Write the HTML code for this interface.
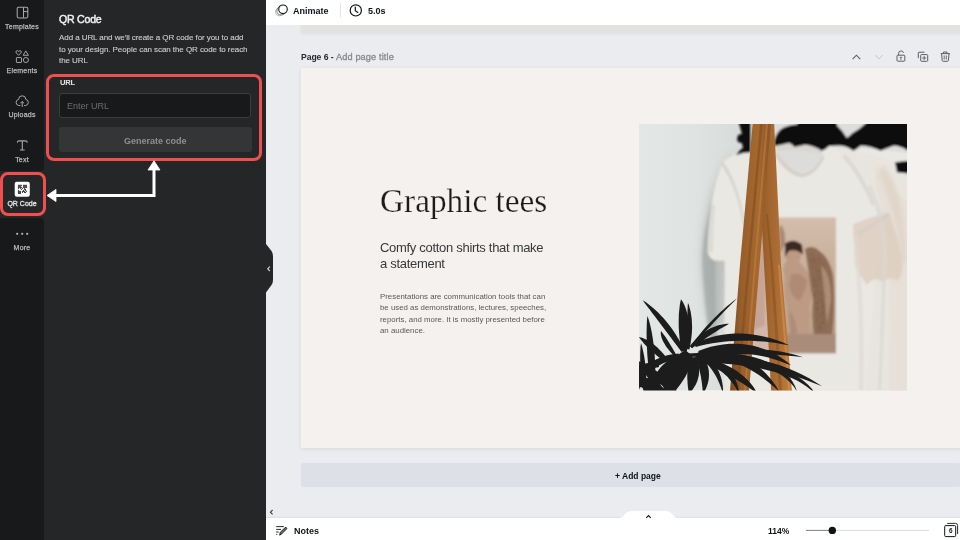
<!DOCTYPE html>
<html><head><meta charset="utf-8">
<style>
*{margin:0;padding:0;box-sizing:border-box}
html,body{width:960px;height:540px;overflow:hidden;background:#ebecf0;font-family:"Liberation Sans",sans-serif}
.t,.lbl,.tx{will-change:transform}
.abs{position:absolute}
.t{position:absolute;white-space:nowrap;line-height:1}
#side{left:0;top:0;width:44px;height:540px;background:#18191b}
#panel{left:44px;top:0;width:222px;height:540px;background:#252627}
.lbl{position:absolute;left:0;width:44px;text-align:center;white-space:nowrap;color:#b9babb;font-size:7px;font-weight:normal;letter-spacing:0.22px;-webkit-text-stroke:0.25px #b9babb;line-height:1}
svg{position:absolute;overflow:visible}
</style></head><body>
<!-- canvas backgrounds -->
<div class="abs" style="left:300.5px;top:25px;width:660px;height:8px;background:#e3e2e0;box-shadow:0 1px 3px rgba(40,50,70,0.07)"></div>
<div class="abs" style="left:266px;top:0;width:694px;height:25px;background:#fff"></div>

<!-- sidebar -->
<div id="side" class="abs"></div>
<div id="panel" class="abs"></div>
<!-- selected tab background & neighbors -->
<div class="abs" style="left:0;top:160px;width:44px;height:70px;background:#252627"></div>
<div class="abs" style="left:0;top:130px;width:44px;height:41px;background:#18191b;border-bottom-right-radius:4px"></div>
<div class="abs" style="left:0;top:218px;width:44px;height:60px;background:#18191b;border-top-right-radius:4px"></div>

<!-- Templates icon -->
<svg style="left:0;top:0" width="44" height="40">
  <rect x="17.2" y="7.3" width="10.6" height="10.6" rx="1.3" fill="none" stroke="#a8a9aa" stroke-width="1.05"/>
  <line x1="23.5" y1="7.3" x2="23.5" y2="17.9" stroke="#a8a9aa" stroke-width="1"/>
  <line x1="23.5" y1="11.6" x2="27.8" y2="11.6" stroke="#a8a9aa" stroke-width="1"/>
</svg>
<div class="lbl" style="top:22.8px">Templates</div>

<!-- Elements icon -->
<svg style="left:0;top:40" width="44" height="40">
</svg>
<svg style="left:0;top:0" width="44" height="80">
  <path d="M18.6 55.3 L16.3 52.9 Q15.5 51.9 16.2 51.1 Q17.1 50.3 18.1 51 L18.6 51.4 L19.1 51 Q20.1 50.3 21 51.1 Q21.7 51.9 20.9 52.9 Z" fill="none" stroke="#a8a9aa" stroke-width="0.95" stroke-linejoin="round"/>
  <path d="M25.8 50.9 L28.4 55.3 L23.2 55.3 Z" fill="none" stroke="#a8a9aa" stroke-width="0.95" stroke-linejoin="round"/>
  <rect x="16.4" y="57.6" width="5.1" height="4.9" rx="0.4" fill="none" stroke="#a8a9aa" stroke-width="0.95"/>
  <circle cx="25.9" cy="60" r="2.55" fill="none" stroke="#a8a9aa" stroke-width="0.95"/>
</svg>
<div class="lbl" style="top:67.3px">Elements</div>

<!-- Uploads icon -->
<svg style="left:0;top:0" width="44" height="120">
  <path d="M20.3 105.5 L18.7 105.5 A3.1 3.1 0 0 1 18.6 99.4 A3.6 3.6 0 0 1 25.8 99.4 A3.1 3.1 0 0 1 25.7 105.5 L24.1 105.5" fill="none" stroke="#a8a9aa" stroke-width="1"/>
  <path d="M22.2 107 L22.2 101.6 M20.4 103.3 L22.2 101.5 L24 103.3" fill="none" stroke="#a8a9aa" stroke-width="1"/>
</svg>
<div class="lbl" style="top:111.3px">Uploads</div>

<!-- Text icon -->
<svg style="left:0;top:0" width="44" height="160">
  <path d="M17.3 142.6 Q17.4 140.9 19.2 140.9 L25.4 140.9 Q27.2 140.9 27.3 142.6 M22.3 140.9 L22.3 150 M19.9 150 L24.7 150" fill="none" stroke="#a8a9aa" stroke-width="1.1"/>
</svg>
<div class="lbl" style="top:155.5px">Text</div>

<!-- QR Code icon -->
<svg style="left:0;top:0" width="44" height="200">
  <rect x="14.7" y="181.7" width="15.1" height="15.1" rx="2" fill="#fff"/>
  <g fill="#3a3b3c" filter="url(#qrb)"><rect x="17.90" y="184.80" width="1.06" height="1.06"/><rect x="18.91" y="184.80" width="1.06" height="1.06"/><rect x="19.92" y="184.80" width="1.06" height="1.06"/><rect x="20.93" y="184.80" width="1.06" height="1.06"/><rect x="22.96" y="184.80" width="1.06" height="1.06"/><rect x="23.97" y="184.80" width="1.06" height="1.06"/><rect x="24.98" y="184.80" width="1.06" height="1.06"/><rect x="25.99" y="184.80" width="1.06" height="1.06"/><rect x="17.90" y="185.81" width="1.06" height="1.06"/><rect x="18.91" y="185.81" width="1.06" height="1.06"/><rect x="19.92" y="185.81" width="1.06" height="1.06"/><rect x="22.96" y="185.81" width="1.06" height="1.06"/><rect x="23.97" y="185.81" width="1.06" height="1.06"/><rect x="24.98" y="185.81" width="1.06" height="1.06"/><rect x="25.99" y="185.81" width="1.06" height="1.06"/><rect x="17.90" y="186.82" width="1.06" height="1.06"/><rect x="18.91" y="186.82" width="1.06" height="1.06"/><rect x="19.92" y="186.82" width="1.06" height="1.06"/><rect x="20.93" y="186.82" width="1.06" height="1.06"/><rect x="22.96" y="186.82" width="1.06" height="1.06"/><rect x="23.97" y="186.82" width="1.06" height="1.06"/><rect x="24.98" y="186.82" width="1.06" height="1.06"/><rect x="25.99" y="186.82" width="1.06" height="1.06"/><rect x="17.90" y="187.83" width="1.06" height="1.06"/><rect x="19.92" y="187.83" width="1.06" height="1.06"/><rect x="21.94" y="187.83" width="1.06" height="1.06"/><rect x="23.97" y="187.83" width="1.06" height="1.06"/><rect x="20.93" y="188.84" width="1.06" height="1.06"/><rect x="23.97" y="188.84" width="1.06" height="1.06"/><rect x="24.98" y="188.84" width="1.06" height="1.06"/><rect x="17.90" y="189.86" width="1.06" height="1.06"/><rect x="22.96" y="189.86" width="1.06" height="1.06"/><rect x="24.98" y="189.86" width="1.06" height="1.06"/><rect x="17.90" y="190.87" width="1.06" height="1.06"/><rect x="18.91" y="190.87" width="1.06" height="1.06"/><rect x="19.92" y="190.87" width="1.06" height="1.06"/><rect x="21.94" y="190.87" width="1.06" height="1.06"/><rect x="22.96" y="190.87" width="1.06" height="1.06"/><rect x="23.97" y="190.87" width="1.06" height="1.06"/><rect x="25.99" y="190.87" width="1.06" height="1.06"/><rect x="17.90" y="191.88" width="1.06" height="1.06"/><rect x="18.91" y="191.88" width="1.06" height="1.06"/><rect x="19.92" y="191.88" width="1.06" height="1.06"/><rect x="21.94" y="191.88" width="1.06" height="1.06"/><rect x="23.97" y="191.88" width="1.06" height="1.06"/><rect x="24.98" y="191.88" width="1.06" height="1.06"/><rect x="17.90" y="192.89" width="1.06" height="1.06"/><rect x="18.91" y="192.89" width="1.06" height="1.06"/><rect x="19.92" y="192.89" width="1.06" height="1.06"/></g>
  <defs><filter id="qrb"><feGaussianBlur stdDeviation="0.25"/></filter></defs>
</svg>
<div class="lbl" style="top:200.2px;color:#e4e4e4;letter-spacing:0;-webkit-text-stroke:0.3px #e4e4e4;left:0.3px">QR Code</div>

<!-- More -->
<svg style="left:0;top:0" width="44" height="240">
  <circle cx="17.2" cy="233.8" r="1.15" fill="#b0b1b2"/>
  <circle cx="22.2" cy="233.8" r="1.15" fill="#b0b1b2"/>
  <circle cx="27.2" cy="233.8" r="1.15" fill="#b0b1b2"/>
</svg>
<div class="lbl" style="top:244.2px">More</div>

<!-- red highlight QR item -->
<div class="abs" style="left:0.2px;top:171.8px;width:45.9px;height:44px;border:3.4px solid #f04f4f;border-radius:8px"></div>

<!-- panel contents -->
<div class="t" style="left:59.3px;top:13.8px;font-size:10.6px;color:#f2f2f2;letter-spacing:-0.25px;-webkit-text-stroke:0.45px #f2f2f2">QR Code</div>
<div class="abs tx" style="left:59.3px;top:32px;font-size:8px;line-height:11.5px;color:#cbcccd;white-space:nowrap;letter-spacing:-0.07px;-webkit-text-stroke:0.12px #cbcccd">Add a URL and we'll create a QR code for you to add<br>to your design. People can scan the QR code to reach<br>the URL</div>
<div class="t" style="left:59.5px;top:79.1px;font-size:7.6px;font-weight:bold;color:#e6e6e6;letter-spacing:-0.25px">URL</div>
<div class="abs" style="left:58.8px;top:93px;width:192.7px;height:24.5px;background:#18191b;border:1px solid #3b3c3e;border-radius:3px"></div>
<div class="t" style="left:67.4px;top:102.2px;font-size:9px;color:#6c6d6f">Enter URL</div>
<div class="abs" style="left:59px;top:127px;width:192.5px;height:25px;background:#343537;border-radius:3px"></div>
<div class="t" style="left:59px;width:192.5px;text-align:center;top:136.6px;font-size:9px;font-weight:bold;color:#8e8f90">Generate code</div>
<div class="abs" style="left:46.2px;top:73.6px;width:216px;height:87px;border:3.4px solid #f04f4f;border-radius:8px"></div>

<!-- arrows -->
<svg style="left:0;top:0" width="270" height="220">
  <path d="M55 195.5 L154 195.5 L154 169" fill="none" stroke="#fff" stroke-width="3"/>
  <path d="M47 195.5 L56 189.4 L56 201.6 Z" fill="#fff" stroke="#fff" stroke-width="0.8" stroke-linejoin="round"/>
  <path d="M154 160.8 L148 170 L160 170 Z" fill="#fff" stroke="#fff" stroke-width="0.8" stroke-linejoin="round"/>
</svg>

<!-- collapse handle -->
<svg style="left:0;top:0" width="300" height="300">
  <path d="M265 244 L266 244 L271.5 251 Q273 253 273 256 L273 280 Q273 283 271.5 285 L266 292.5 L265 292.5 Z" fill="#252627"/>
  <path d="M269.8 266.6 L267.7 268.8 L269.8 271" fill="none" stroke="#d4d5d6" stroke-width="1.1"/>
</svg>

<!-- top bar contents -->
<svg style="left:0;top:0" width="400" height="25">
  <circle cx="279.3" cy="12.1" r="3.8" fill="none" stroke="#b0b2b5" stroke-width="0.9"/>
  <circle cx="281" cy="10.8" r="4.1" fill="#fff" stroke="#6f7276" stroke-width="0.9"/>
  <circle cx="283" cy="9.3" r="4.3" fill="#fff" stroke="#0e1318" stroke-width="1.1"/>
  <line x1="340.5" y1="3" x2="340.5" y2="17.5" stroke="#e4e5e7" stroke-width="1"/>
  <circle cx="355.8" cy="10.4" r="5.6" fill="none" stroke="#0e1318" stroke-width="1.2"/>
  <path d="M355.3 6.8 L355.3 10.8 L358.2 12.8" fill="none" stroke="#0e1318" stroke-width="1.2"/>
</svg>
<div class="t" style="left:293.2px;top:6.8px;font-size:9px;font-weight:bold;color:#0e1318">Animate</div>
<div class="t" style="left:368.3px;top:6.8px;font-size:9px;font-weight:bold;color:#0e1318">5.0s</div>

<!-- page header -->
<div class="t" style="left:301px;top:53.2px;font-size:8.6px;font-weight:bold;color:#25292e;letter-spacing:-0.05px">Page 6 -</div><div class="t" style="left:336px;top:52.8px;font-size:9.2px;color:#85888c;letter-spacing:0.12px;-webkit-text-stroke:0.3px #85888c">Add page title</div>
<svg style="left:0;top:0" width="960" height="70">
  <path d="M852.6 59.2 L856.4 55.2 L860.2 59.2" fill="none" stroke="#5a5e63" stroke-width="1.1"/>
  <path d="M875.2 55 L879 59 L882.8 55" fill="none" stroke="#c3c6ca" stroke-width="1"/>
  <rect x="897" y="55.2" width="7.8" height="6" rx="0.8" fill="none" stroke="#5a5e63" stroke-width="1"/>
  <path d="M898.6 55.2 L898.6 53.2 Q898.8 50.9 901 50.9 Q903.2 50.9 903.5 52.8" fill="none" stroke="#5a5e63" stroke-width="1"/>
  <path d="M900.9 60 L900.9 57 M899.8 58 L900.9 56.8 L902 58" fill="none" stroke="#5a5e63" stroke-width="0.8"/>
  <path d="M924.5 52.2 L919 52.2 Q918.3 52.2 918.3 53 L918.3 58.2" fill="none" stroke="#5a5e63" stroke-width="1"/>
  <rect x="920.7" y="54.6" width="7" height="6.7" rx="0.8" fill="none" stroke="#5a5e63" stroke-width="1"/>
  <path d="M924.2 56 L924.2 60 M922.2 58 L926.2 58" fill="none" stroke="#5a5e63" stroke-width="0.9"/>
  <path d="M940.7 53.6 L949.9 53.6 M943.5 53.4 L943.5 52 L947 52 L947 53.4" fill="none" stroke="#5a5e63" stroke-width="1"/>
  <path d="M941.6 53.8 L942.2 60.4 Q942.3 61.3 943.2 61.3 L947.4 61.3 Q948.3 61.3 948.4 60.4 L949 53.8" fill="none" stroke="#5a5e63" stroke-width="1"/>
  <path d="M944.2 55.5 L944.2 59.5 M946.3 55.5 L946.3 59.5" fill="none" stroke="#5a5e63" stroke-width="0.9"/>
</svg>

<!-- page -->
<div class="abs" style="left:301px;top:68px;width:670px;height:380px;background:#f4f1ee;box-shadow:0 1px 4px rgba(40,50,70,0.10)"></div>
<div class="t" style="left:380px;top:184.1px;font-family:'Liberation Serif',serif;font-size:33.3px;color:#1b1b1c;-webkit-text-stroke:0.25px #f4f1ee">Graphic tees</div>
<div class="abs tx" style="left:380px;top:239.6px;font-size:13px;line-height:16.2px;color:#38393b;white-space:nowrap;letter-spacing:-0.3px">Comfy cotton shirts that make<br>a statement</div>
<div class="abs tx" style="left:380px;top:290.8px;font-size:7.85px;line-height:11.43px;color:#58595b;white-space:nowrap">Presentations are communication tools that can<br>be used as demonstrations, lectures, speeches,<br>reports, and more. It is mostly presented before<br>an audience.</div>

<!-- photo -->
<svg style="left:639px;top:124.3px" width="268" height="266.4" viewBox="0 0 268 265" preserveAspectRatio="none">
<defs>
  <clipPath id="pc"><rect x="0" y="0" width="268" height="265"/></clipPath>
  <filter id="b1" x="-20%" y="-20%" width="140%" height="140%"><feGaussianBlur stdDeviation="0.8"/></filter>
  <filter id="b2" x="-50%" y="-50%" width="200%" height="200%"><feGaussianBlur stdDeviation="4"/></filter>
  <filter id="b3" x="-50%" y="-50%" width="200%" height="200%"><feGaussianBlur stdDeviation="1.6"/></filter>
  <filter id="b05" x="-20%" y="-20%" width="140%" height="140%"><feGaussianBlur stdDeviation="0.5"/></filter>
  <filter id="mot"><feTurbulence type="fractalNoise" baseFrequency="0.35" numOctaves="2" seed="4" result="n"/><feColorMatrix in="n" type="matrix" values="0 0 0 0 0  0 0 0 0 0  0 0 0 0 0  0 0 0 -2.2 1.3" result="a"/><feComposite in="SourceGraphic" in2="a" operator="in"/></filter>
  <linearGradient id="wall" x1="0" y1="0" x2="1" y2="0">
    <stop offset="0" stop-color="#e3e7e6"/><stop offset="0.2" stop-color="#dfe3e2"/><stop offset="0.4" stop-color="#d6dad8"/>
  </linearGradient>
  <linearGradient id="woodL" x1="0" y1="0" x2="1" y2="0">
    <stop offset="0" stop-color="#7a4a26"/><stop offset="0.3" stop-color="#9a5f2b"/><stop offset="0.7" stop-color="#a5682f"/><stop offset="1" stop-color="#8a5328"/>
  </linearGradient>
  <linearGradient id="woodR" x1="0" y1="0" x2="1" y2="0">
    <stop offset="0" stop-color="#845227"/><stop offset="0.3" stop-color="#a0632c"/><stop offset="0.65" stop-color="#ae6f35"/><stop offset="1" stop-color="#c27f3d"/>
  </linearGradient>
  <linearGradient id="print" x1="0" y1="0" x2="0" y2="1">
    <stop offset="0" stop-color="#d3bdab"/><stop offset="0.3" stop-color="#cbb29f"/><stop offset="0.8" stop-color="#bea48f"/><stop offset="1" stop-color="#a98e7b"/>
  </linearGradient>
</defs>
<g clip-path="url(#pc)">
  <rect x="0" y="0" width="268" height="265" fill="url(#wall)"/>
  <!-- shadow of shirt on wall -->
  <path d="M96 26 Q76 50 68 90 Q62 125 64 150 Q66 175 72 200 L86 200 L90 40 Z" fill="#a6aba9" filter="url(#b2)" opacity="0.6"/>
  <path d="M88 38 Q74 66 66 106 Q62 128 64 150 Q66 180 70 215 L78 215 Q74 130 80 90 Q84 60 92 40 Z" fill="#a3a8a6" filter="url(#b3)" opacity="0.75"/>
  <g filter="url(#b1)">
  <!-- wall top between hangers -->
  <rect x="112" y="-5" width="165" height="39" fill="#dcdedc"/>
  <!-- shirts base -->
  <path d="M111 24 Q100 27 94 31 Q86 36 84 37 Q76 56 72 80 Q69 105 68.5 127 Q70 134 76 136 L86 136 L85 272 L275 272 L275 30 Q240 24 200 24 Q180 20 160 19 Q140 18 111 24 Z" fill="#eae8e3"/>
  <!-- back shirts with tint -->
  <path d="M200 24 Q235 28 262 40 L275 60 L275 272 L226 272 Q232 200 236 150 Q246 120 250 92 Q236 58 200 30 Z" fill="#e8e5df"/>
  <path d="M236 40 Q252 50 258 70 L275 80 L275 272 L250 272 Q252 180 248 120 Q244 90 236 60 Z" fill="#e6e0d8"/>
  <path d="M214 100 Q232 92 250 88 Q258 110 262 130 Q266 150 258 156 Q250 150 244 158 Q236 150 228 160 Q220 150 216 140 Z" fill="#dccbbb" opacity="0.75"/>
  <path d="M244 40 Q262 60 266 110 L268 140 L262 135 Q258 90 240 50 Z" fill="#dccdbd" opacity="0.5" filter="url(#b3)"/>
  <path d="M232 60 Q246 90 248 120 Q246 180 242 265 L239 265 Q243 180 244 120 Q241 90 229 62 Z" fill="#dbd8d2" opacity="0.8"/>
  <path d="M206 30 Q224 48 236 80 L233 82 Q221 52 203 32 Z" fill="#dcd9d3"/>
  <path d="M218 108 Q236 98 250 88 L251 90.5 Q236 100 220 111 Z" fill="#d3cfc8"/>
  <path d="M214 112 Q222 180 220 265 L224 265 Q226 180 218 112 Z" fill="#dedad4" opacity="0.8"/>
  <!-- collar -->
  <path d="M136 19 Q160 17 184 23 L183 30 Q160 26 137 27 Z" fill="#d9d6d0"/>
  <path d="M137 27 Q150 44 162 48 Q176 47 184 30 Q160 24 137 27 Z" fill="#dcdcda"/>
  <path d="M137 27 Q150 45 162 49 Q176 48 184 30 L185 34 Q176 52 162 53 Q148 50 136 32 Z" fill="#d4d0ca"/>
  <!-- sleeve seam front shirt -->
  <path d="M84 37 Q100 60 106 100 L104 100 Q98 62 82 40 Z" fill="#d5d3ce"/>
  <path d="M72 80 Q70 105 69 127 L74 128 Q74 105 76 80 Z" fill="#dcdad5"/>
  <!-- hangers -->
  <path d="M135 21 Q135 12 141 6 Q147 1 158 0.5 L160 -4 L198 -4 L198 1.5 Q203 6 208 14 Q214 8 220 5 Q225 1 230 -4 L275 -4 L275 26 L268 26 Q262 22 255 21.4 Q248 24 241.7 26.6 Q232 22 221.7 21.4 Q218 25 214.3 26.6 Q208 22 201 21.4 Q195 21 190 22 Q186 26 182.8 26.6 Q174 21 165.8 20.7 Q160 22 155.4 23 Q152 19 149.5 19 Q142 21 135 22 Z" fill="#0b0b0b"/>
  <path d="M256 38 L275 36 L275 50 L258 48 Z" fill="#0b0b0b"/>
  <path d="M99 -4 L112 -4 L112 28 Q104 28 97 31 Q101 25 104 24 L103 19 Q99 19 98 16 L99 11 L103 10 Z" fill="#0d0d0d"/>
  <!-- print -->
  <rect x="140" y="93" width="57" height="135" fill="url(#print)"/>
  <rect x="113" y="93" width="27" height="135" fill="#d2b8ab"/>
  <path d="M146 124 Q153 116 161 122 Q164 130 160 137 Q168 144 172 156 Q174 170 170 182 Q172 196 168 210 L152 212 Q148 196 148 182 Q144 168 146 152 Q142 142 148 136 Q144 130 146 124 Z" fill="#bc9a84"/>
  <path d="M152 150 Q160 146 168 156 Q166 170 160 176 Q152 172 150 160 Z" fill="#a98571" opacity="0.7"/>
  <path d="M150 186 Q156 190 158 208 L152 210 Z" fill="#a48470" opacity="0.6"/>
  <path d="M146 119 Q154 113 163 120 L164 130 Q158 124 150 126 L146 132 Z" fill="#3a2b24"/>
  <path d="M142 100 Q147 106 146 120 L141 128 L140 104 Z" fill="#a27e68" opacity="0.8"/>
  <path d="M166 124 Q174 120 180 126 Q190 132 194 150 Q197 180 193 212 L176 214 Q172 196 174 176 Q170 150 166 124 Z" fill="#8e6c54"/>
  <path d="M170 130 Q180 128 186 140 Q190 170 186 205 L178 206 Q176 170 170 130 Z" fill="#6a4d3a" opacity="0.6" filter="url(#mot)"/>
  <path d="M182 140 Q192 150 192 175 L188 200 Q186 170 182 140 Z" fill="#c4a48d" opacity="0.6"/>
  <rect x="140" y="209" width="57" height="19" fill="#a98d7a"/>
  <path d="M114 110 Q120 104 126 112 L126 200 L115 205 Z" fill="#c3a091" opacity="0.8"/>
  </g>
  <!-- ladder -->
  <g filter="url(#b05)">
  <path d="M117 -4 L135 -4 L142 140 L153.5 272 L132.5 272 L125 140 Z" fill="url(#woodR)"/>
  <path d="M114 -4 L132 -4 L120.6 140 L109.5 272 L90.5 272 L101 140 Z" fill="url(#woodL)"/>
  <path d="M121 0 L123.5 0 L111 140 L100 265 L97 265 L108.5 140 Z" fill="#7a4820" opacity="0.5"/>
  <path d="M127 0 L129 0 L117 140 L107 265 L105 265 L115 140 Z" fill="#c58442" opacity="0.5"/>
  <path d="M127 90 L129 90 L134 140 L143 265 L140 265 L131.5 140 Z" fill="#7e4b20" opacity="0.45"/>
  <path d="M139 140 L141 140 L151 265 L149 265 Z" fill="#d99550" opacity="0.55"/>
  </g>
  <!-- plant -->
  <g fill="#1b1d1b" filter="url(#b05)">
    <path d="M45.4 225.1 L43.5 221.2 L41.5 217.3 L39.3 213.6 L37.1 209.9 L34.8 206.4 L32.4 203.0 L29.9 199.6 L27.3 196.4 L24.6 193.3 L21.9 190.4 L19.1 187.5 L16.1 184.8 L13.2 182.2 L10.1 179.7 L7.0 177.4 L3.7 175.3 L3.7 175.3 L6.0 178.5 L8.3 181.5 L10.7 184.6 L13.0 187.7 L15.4 190.8 L17.8 193.9 L20.1 197.0 L22.5 200.2 L25.0 203.4 L27.4 206.7 L29.9 209.9 L32.4 213.2 L34.9 216.6 L37.4 219.9 L40.0 223.4 L42.6 226.9 Z"/>
    <path d="M47.8 226.1 L48.5 222.2 L49.2 218.5 L49.7 214.8 L50.0 211.1 L50.2 207.5 L50.2 204.0 L50.1 200.6 L49.8 197.3 L49.4 194.1 L48.8 190.9 L48.1 187.9 L47.2 184.9 L46.2 182.1 L45.0 179.4 L43.7 176.8 L42.0 174.4 L42.0 174.4 L41.3 177.2 L40.8 180.0 L40.5 182.9 L40.2 185.8 L39.9 188.7 L39.8 191.7 L39.7 194.8 L39.7 197.9 L39.7 201.1 L39.9 204.4 L40.1 207.7 L40.4 211.2 L40.7 214.7 L41.2 218.4 L41.7 222.1 L42.2 225.9 Z"/>
    <path d="M50.4 224.2 L51.1 220.9 L51.6 217.8 L52.1 214.6 L52.5 211.5 L52.8 208.5 L53.0 205.4 L53.1 202.4 L53.0 199.5 L52.9 196.6 L52.7 193.8 L52.3 191.0 L51.9 188.3 L51.4 185.6 L50.7 183.0 L50.0 180.4 L49.0 178.0 L49.0 178.0 L48.7 180.6 L48.6 183.2 L48.5 185.8 L48.4 188.5 L48.2 191.2 L48.1 193.9 L48.0 196.7 L48.0 199.5 L47.9 202.4 L47.8 205.3 L47.8 208.2 L47.7 211.2 L47.7 214.3 L47.7 217.4 L47.6 220.6 L47.6 223.8 Z"/>
    <path d="M15.9 265.9 L16.1 260.2 L16.3 254.6 L16.3 249.2 L16.3 243.9 L16.1 238.7 L15.9 233.7 L15.6 228.8 L15.1 224.0 L14.6 219.4 L14.0 214.9 L13.3 210.5 L12.6 206.3 L11.7 202.3 L10.8 198.4 L9.7 194.6 L8.4 191.0 L8.4 191.0 L8.0 194.8 L7.8 198.7 L7.7 202.7 L7.6 206.8 L7.6 211.0 L7.7 215.4 L7.8 219.9 L8.1 224.5 L8.3 229.3 L8.7 234.1 L9.1 239.1 L9.5 244.3 L10.1 249.5 L10.7 254.9 L11.3 260.4 L12.1 266.1 Z"/>
    <path d="M52.6 222.5 L55.3 219.3 L57.9 216.2 L60.7 213.2 L63.4 210.1 L66.1 207.0 L68.9 203.9 L71.7 200.9 L74.5 197.8 L77.4 194.8 L80.2 191.7 L83.1 188.7 L86.0 185.6 L89.0 182.6 L92.0 179.5 L95.0 176.5 L98.0 173.4 L98.0 173.4 L94.5 176.0 L91.2 178.7 L87.9 181.4 L84.7 184.2 L81.5 187.1 L78.5 189.9 L75.4 192.9 L72.5 195.9 L69.6 198.9 L66.8 202.0 L64.0 205.2 L61.4 208.4 L58.8 211.6 L56.2 214.9 L53.8 218.2 L51.4 221.5 Z"/>
    <path d="M53.1 223.1 L55.6 221.2 L58.1 219.4 L60.5 217.7 L62.9 216.0 L65.2 214.3 L67.5 212.7 L69.8 211.2 L72.0 209.7 L74.3 208.2 L76.5 206.8 L78.7 205.4 L80.9 204.0 L83.2 202.7 L85.4 201.4 L87.7 200.1 L90.0 198.7 L90.0 198.7 L87.3 198.7 L84.6 199.1 L82.0 199.6 L79.3 200.3 L76.7 201.1 L74.1 202.2 L71.5 203.3 L69.0 204.7 L66.5 206.2 L64.1 207.9 L61.7 209.7 L59.4 211.6 L57.2 213.7 L55.0 216.0 L52.9 218.4 L50.9 220.9 Z"/>
    <path d="M56.7 221.8 L62.2 220.4 L67.8 219.2 L73.4 218.2 L79.0 217.3 L84.5 216.6 L90.2 216.1 L95.8 215.8 L101.5 215.6 L107.3 215.5 L113.1 215.7 L119.0 216.0 L125.0 216.4 L131.1 217.1 L137.2 217.9 L143.5 219.0 L150.0 220.0 L150.0 220.0 L144.0 217.3 L137.9 215.1 L131.9 213.1 L125.8 211.6 L119.7 210.3 L113.6 209.3 L107.5 208.7 L101.5 208.4 L95.5 208.5 L89.5 208.9 L83.6 209.6 L77.8 210.7 L72.0 212.1 L66.4 213.8 L60.8 215.8 L55.3 218.2 Z"/>
    <path d="M60.7 230.3 L66.9 229.3 L73.0 228.6 L79.0 228.0 L84.8 227.7 L90.6 227.6 L96.3 227.7 L101.9 227.9 L107.4 228.4 L112.9 229.1 L118.4 230.0 L123.9 231.1 L129.4 232.4 L135.0 234.0 L140.6 235.8 L146.2 237.9 L152.0 240.0 L152.0 240.0 L147.2 236.0 L142.2 232.5 L137.0 229.3 L131.6 226.6 L126.0 224.2 L120.3 222.3 L114.5 220.7 L108.6 219.6 L102.6 218.9 L96.5 218.6 L90.3 218.7 L84.2 219.3 L78.0 220.3 L71.7 221.7 L65.5 223.5 L59.3 225.7 Z"/>
    <path d="M69.9 230.1 L74.9 230.9 L79.8 232.0 L84.6 233.2 L89.2 234.6 L93.7 236.2 L98.1 237.9 L102.4 239.8 L106.7 241.9 L110.9 244.1 L115.1 246.6 L119.2 249.2 L123.4 252.1 L127.5 255.3 L131.6 258.6 L135.7 262.2 L140.0 266.0 L140.0 266.0 L137.2 261.0 L133.9 256.4 L130.5 252.1 L126.9 248.1 L123.0 244.4 L119.0 241.0 L114.7 237.9 L110.3 235.1 L105.7 232.7 L101.0 230.7 L96.1 229.0 L91.1 227.6 L86.0 226.7 L80.7 226.1 L75.5 225.8 L70.1 225.9 Z"/>
    <path d="M64.0 233.7 L72.1 234.3 L80.2 235.0 L88.1 235.8 L95.8 236.8 L103.5 238.0 L111.1 239.3 L118.6 240.7 L126.0 242.3 L133.3 244.1 L140.6 246.0 L147.8 248.1 L154.9 250.4 L162.0 252.8 L169.0 255.4 L176.0 258.2 L183.0 261.0 L183.0 261.0 L176.7 256.8 L170.1 253.0 L163.4 249.5 L156.5 246.2 L149.4 243.3 L142.3 240.6 L135.0 238.2 L127.5 236.2 L119.9 234.4 L112.2 232.9 L104.4 231.7 L96.5 230.8 L88.5 230.2 L80.4 230.0 L72.3 230.0 L64.0 230.3 Z"/>
    <path d="M66.2 231.4 L72.9 230.8 L79.6 230.3 L86.1 229.9 L92.5 229.5 L98.9 229.3 L105.2 229.1 L111.3 229.0 L117.4 229.0 L123.5 229.1 L129.4 229.3 L135.3 229.5 L141.2 229.9 L146.9 230.3 L152.7 230.8 L158.3 231.4 L164.0 232.0 L164.0 232.0 L158.6 230.2 L153.0 228.7 L147.4 227.5 L141.6 226.4 L135.7 225.5 L129.7 224.8 L123.7 224.3 L117.6 224.0 L111.3 223.9 L105.0 223.9 L98.7 224.2 L92.2 224.7 L85.7 225.4 L79.1 226.3 L72.5 227.4 L65.8 228.6 Z"/>
    <path d="M29.2 234.8 L27.5 232.5 L25.8 230.3 L24.1 228.3 L22.3 226.3 L20.5 224.5 L18.7 222.7 L16.9 221.1 L15.1 219.6 L13.2 218.2 L11.4 216.9 L9.5 215.8 L7.6 214.7 L5.7 213.8 L3.8 213.0 L2.0 212.4 L0.0 212.0 L0.0 212.0 L1.1 213.7 L2.3 215.2 L3.6 216.7 L4.9 218.3 L6.3 219.8 L7.8 221.3 L9.3 222.9 L10.9 224.4 L12.6 226.0 L14.4 227.5 L16.3 229.1 L18.2 230.7 L20.2 232.3 L22.3 233.9 L24.5 235.6 L26.8 237.2 Z"/>
    <path d="M23.8 265.0 L23.0 262.5 L22.0 260.1 L21.0 257.7 L19.9 255.4 L18.7 253.3 L17.4 251.2 L16.0 249.2 L14.6 247.2 L13.0 245.4 L11.4 243.7 L9.7 242.1 L7.9 240.7 L6.1 239.3 L4.1 238.0 L2.2 236.9 L0.0 236.0 L0.0 236.0 L0.8 238.2 L1.8 240.2 L2.8 242.1 L3.9 244.1 L4.9 246.0 L6.1 248.0 L7.2 249.9 L8.4 251.8 L9.7 253.6 L11.0 255.5 L12.4 257.4 L13.8 259.3 L15.3 261.2 L16.9 263.1 L18.5 265.1 L20.2 267.0 Z"/>
    <path d="M39.7 228.3 L35.8 228.7 L32.1 229.3 L28.5 230.1 L25.1 231.1 L21.8 232.2 L18.6 233.6 L15.6 235.1 L12.8 236.8 L10.2 238.7 L7.8 240.7 L5.6 243.0 L3.6 245.3 L1.8 247.8 L0.2 250.4 L-1.1 253.1 L-2.0 256.0 L-2.0 256.0 L0.2 254.0 L2.3 252.0 L4.5 250.2 L6.7 248.4 L9.0 246.8 L11.3 245.2 L13.7 243.7 L16.2 242.2 L18.8 240.8 L21.4 239.4 L24.2 238.0 L27.2 236.7 L30.2 235.4 L33.5 234.1 L36.8 232.9 L40.3 231.7 Z"/>
    <path d="M46.3 224.9 L43.5 226.5 L41.0 228.3 L38.6 230.3 L36.5 232.6 L34.6 235.0 L33.1 237.6 L31.8 240.3 L30.7 243.2 L30.0 246.2 L29.6 249.2 L29.5 252.3 L29.7 255.5 L30.2 258.6 L31.0 261.8 L32.1 264.9 L34.0 268.0 L34.0 268.0 L36.4 265.4 L38.4 262.9 L40.1 260.6 L41.8 258.3 L43.3 256.1 L44.8 254.0 L46.1 251.9 L47.3 249.8 L48.3 247.7 L49.3 245.6 L50.2 243.4 L51.0 241.2 L51.7 238.8 L52.4 236.4 L53.1 233.8 L53.7 231.1 Z"/>
    <path d="M56.0 229.3 L56.8 231.8 L57.6 234.2 L58.3 236.5 L59.0 238.8 L59.5 241.0 L60.1 243.2 L60.6 245.4 L61.1 247.7 L61.6 249.9 L62.0 252.2 L62.4 254.6 L62.8 257.0 L63.1 259.6 L63.4 262.2 L63.6 265.0 L64.0 268.0 L64.0 268.0 L65.7 265.5 L67.1 262.9 L68.1 260.2 L69.0 257.5 L69.6 254.7 L69.9 251.9 L70.0 249.1 L69.9 246.3 L69.5 243.6 L68.8 240.9 L67.9 238.3 L66.8 235.7 L65.4 233.3 L63.8 230.9 L62.0 228.7 L60.0 226.7 Z"/>
    <path d="M57.5 231.7 L61.5 233.4 L65.2 235.1 L68.7 236.9 L72.0 238.8 L75.1 240.7 L78.0 242.7 L80.8 244.7 L83.4 246.9 L85.8 249.1 L88.2 251.3 L90.4 253.8 L92.5 256.3 L94.5 259.0 L96.4 261.8 L98.2 264.8 L100.0 268.0 L100.0 268.0 L99.6 264.3 L98.8 260.7 L97.7 257.3 L96.3 254.0 L94.5 250.8 L92.5 247.7 L90.2 244.8 L87.6 242.1 L84.8 239.6 L81.7 237.4 L78.3 235.3 L74.8 233.5 L71.0 231.8 L67.0 230.5 L62.8 229.3 L58.5 228.3 Z"/>
    <path d="M59.4 231.2 L61.6 232.8 L63.6 234.4 L65.6 236.1 L67.4 237.9 L69.1 239.8 L70.8 241.7 L72.3 243.7 L73.9 245.9 L75.3 248.1 L76.7 250.5 L78.0 253.0 L79.3 255.7 L80.5 258.5 L81.7 261.5 L82.8 264.7 L84.0 268.0 L84.0 268.0 L84.0 264.5 L83.8 261.0 L83.3 257.7 L82.7 254.6 L81.8 251.5 L80.8 248.6 L79.6 245.8 L78.1 243.1 L76.5 240.7 L74.7 238.4 L72.8 236.3 L70.6 234.3 L68.3 232.6 L65.9 231.1 L63.3 229.8 L60.6 228.8 Z"/>
    <path d="M38.9 230.2 L36.1 231.4 L33.4 232.8 L30.8 234.3 L28.3 236.0 L25.9 237.9 L23.6 240.0 L21.5 242.2 L19.6 244.6 L17.8 247.1 L16.1 249.7 L14.7 252.5 L13.3 255.4 L12.2 258.4 L11.2 261.5 L10.4 264.7 L10.0 268.0 L10.0 268.0 L12.1 265.4 L14.1 262.9 L16.0 260.5 L17.9 258.1 L19.8 255.8 L21.7 253.6 L23.6 251.5 L25.4 249.4 L27.3 247.4 L29.2 245.4 L31.1 243.4 L33.0 241.5 L34.9 239.6 L36.9 237.6 L39.0 235.7 L41.1 233.8 Z"/>
    <path d="M37.0 229.3 L35.8 227.1 L34.6 225.1 L33.5 223.2 L32.4 221.3 L31.3 219.6 L30.3 217.9 L29.4 216.3 L28.4 214.9 L27.5 213.5 L26.7 212.2 L25.8 211.0 L25.0 209.9 L24.3 208.8 L23.5 207.8 L22.8 206.9 L22.0 206.0 L22.0 206.0 L21.8 207.2 L21.8 208.4 L21.9 209.8 L22.2 211.1 L22.6 212.6 L23.1 214.0 L23.8 215.6 L24.6 217.1 L25.5 218.7 L26.5 220.3 L27.6 222.0 L28.9 223.7 L30.3 225.4 L31.7 227.1 L33.3 228.9 L35.0 230.7 Z"/>
    <path d="M48.1 231.6 L59.2 231.6 L69.8 231.9 L79.8 232.6 L89.1 233.4 L97.9 234.6 L106.0 236.0 L113.6 237.8 L120.6 239.7 L127.0 242.0 L132.9 244.5 L138.3 247.2 L143.1 250.3 L147.5 253.7 L151.4 257.4 L154.9 261.5 L158.0 266.0 L158.0 266.0 L156.1 260.8 L153.3 255.9 L149.8 251.4 L145.6 247.2 L140.8 243.4 L135.3 239.9 L129.1 236.9 L122.4 234.3 L115.1 232.1 L107.2 230.3 L98.7 229.0 L89.6 228.1 L80.0 227.5 L69.9 227.4 L59.2 227.7 L47.9 228.4 Z"/>
    <path d="M20.0 238.3 L18.0 237.9 L16.1 237.6 L14.2 237.4 L12.4 237.4 L10.7 237.5 L9.1 237.7 L7.5 238.0 L6.1 238.5 L4.8 239.0 L3.5 239.8 L2.5 240.6 L1.6 241.5 L0.8 242.5 L0.3 243.6 L-0.0 244.8 L0.0 246.0 L0.0 246.0 L1.1 245.8 L2.1 245.6 L3.0 245.4 L3.9 245.2 L4.9 245.1 L5.8 244.9 L6.8 244.8 L7.9 244.5 L9.1 244.3 L10.3 244.0 L11.6 243.7 L13.1 243.4 L14.6 243.0 L16.3 242.6 L18.1 242.2 L20.0 241.7 Z"/>
    <path d="M41.3 229.9 L38.8 231.7 L36.6 233.6 L34.5 235.6 L32.6 237.8 L30.8 240.0 L29.3 242.3 L27.9 244.7 L26.8 247.2 L25.9 249.7 L25.2 252.3 L24.7 254.9 L24.5 257.5 L24.4 260.1 L24.6 262.8 L25.0 265.4 L26.0 268.0 L26.0 268.0 L28.0 266.1 L29.7 264.2 L31.3 262.4 L32.8 260.5 L34.2 258.6 L35.6 256.7 L36.9 254.8 L38.2 252.8 L39.4 250.8 L40.5 248.7 L41.6 246.5 L42.7 244.2 L43.7 241.9 L44.7 239.4 L45.7 236.8 L46.7 234.1 Z"/>
    <path d="M50.9 232.3 L50.4 234.6 L49.9 236.7 L49.5 238.9 L49.1 241.0 L48.8 243.1 L48.6 245.2 L48.4 247.3 L48.3 249.4 L48.3 251.5 L48.3 253.7 L48.5 255.9 L48.6 258.1 L48.8 260.5 L49.1 262.9 L49.4 265.3 L50.0 268.0 L50.0 268.0 L52.0 266.2 L53.7 264.1 L55.1 262.0 L56.4 259.9 L57.5 257.6 L58.4 255.3 L59.1 253.0 L59.7 250.6 L60.0 248.2 L60.2 245.8 L60.2 243.4 L59.9 241.0 L59.5 238.6 L58.9 236.3 L58.1 233.9 L57.1 231.7 Z"/>
    <path d="M61.4 236.0 L65.8 238.0 L70.1 240.0 L74.3 242.0 L78.3 243.9 L82.2 245.9 L85.9 247.9 L89.5 249.8 L93.0 251.8 L96.4 253.7 L99.7 255.7 L102.9 257.6 L106.0 259.7 L109.1 261.7 L112.1 263.8 L115.0 265.9 L118.0 268.0 L118.0 268.0 L116.4 264.7 L114.3 261.5 L112.0 258.5 L109.5 255.6 L106.7 252.8 L103.7 250.1 L100.4 247.6 L97.0 245.2 L93.3 243.0 L89.5 241.0 L85.4 239.1 L81.2 237.3 L76.8 235.7 L72.2 234.3 L67.5 233.1 L62.6 232.0 Z"/>
    <path d="M29.5 248.0 L26.4 248.3 L23.5 248.6 L20.7 249.0 L18.1 249.5 L15.6 250.1 L13.3 250.8 L11.1 251.6 L9.1 252.5 L7.2 253.4 L5.6 254.4 L4.1 255.5 L2.8 256.7 L1.7 257.9 L0.8 259.2 L0.2 260.5 L0.0 262.0 L0.0 262.0 L1.4 262.0 L2.7 261.8 L4.1 261.6 L5.4 261.3 L6.9 261.0 L8.5 260.6 L10.1 260.1 L11.9 259.5 L13.8 258.9 L15.8 258.2 L17.9 257.4 L20.2 256.5 L22.6 255.5 L25.1 254.4 L27.7 253.2 L30.5 252.0 Z"/>
    <path d="M66.0 237.4 L76.2 237.8 L86.0 238.5 L95.3 239.3 L104.1 240.4 L112.5 241.6 L120.4 243.0 L127.8 244.6 L134.8 246.4 L141.3 248.4 L147.5 250.6 L153.2 253.0 L158.5 255.5 L163.4 258.3 L167.9 261.3 L172.1 264.6 L176.0 268.0 L176.0 268.0 L173.0 263.7 L169.3 259.7 L165.0 255.9 L160.3 252.5 L155.0 249.3 L149.2 246.4 L143.0 243.8 L136.2 241.6 L129.0 239.6 L121.3 238.0 L113.2 236.6 L104.7 235.6 L95.6 234.9 L86.2 234.5 L76.3 234.4 L66.0 234.6 Z"/>
    <path d="M7.4 265.9 L7.5 262.6 L7.5 259.4 L7.5 256.2 L7.4 253.1 L7.3 249.9 L7.1 246.9 L6.8 243.8 L6.5 240.8 L6.2 237.8 L5.8 234.9 L5.3 232.0 L4.8 229.1 L4.2 226.3 L3.6 223.5 L2.9 220.7 L2.0 218.0 L2.0 218.0 L1.6 220.8 L1.4 223.7 L1.3 226.5 L1.2 229.4 L1.2 232.3 L1.2 235.3 L1.3 238.2 L1.5 241.2 L1.7 244.2 L1.9 247.3 L2.2 250.3 L2.6 253.4 L3.0 256.6 L3.5 259.7 L4.0 262.9 L4.6 266.1 Z"/>
    <path d="M31.5 268.9 L29.5 266.9 L27.4 265.1 L25.4 263.3 L23.3 261.6 L21.3 260.1 L19.2 258.7 L17.1 257.4 L15.0 256.2 L12.8 255.1 L10.6 254.1 L8.3 253.1 L6.0 252.3 L3.7 251.6 L1.3 250.9 L-1.2 250.3 L-4.0 250.0 L-4.0 250.0 L-3.2 252.7 L-2.1 255.1 L-0.7 257.3 L0.7 259.4 L2.4 261.5 L4.1 263.4 L6.0 265.2 L8.0 266.8 L10.2 268.4 L12.5 269.8 L14.9 271.0 L17.4 272.1 L20.0 273.1 L22.7 273.9 L25.6 274.6 L28.5 275.1 Z"/>
    <path d="M41.5 270.6 L39.4 267.5 L37.1 264.5 L34.8 261.7 L32.4 258.9 L29.9 256.3 L27.3 253.8 L24.7 251.4 L22.0 249.1 L19.2 247.0 L16.3 245.0 L13.4 243.1 L10.5 241.4 L7.4 239.8 L4.4 238.3 L1.3 237.0 L-2.0 236.0 L-2.0 236.0 L0.2 238.6 L2.6 240.9 L4.9 243.3 L7.3 245.6 L9.7 248.0 L12.1 250.3 L14.5 252.6 L17.0 254.9 L19.5 257.2 L22.1 259.5 L24.7 261.8 L27.4 264.1 L30.1 266.4 L32.8 268.7 L35.6 271.0 L38.5 273.4 Z"/>
    <path d="M-3.3 272.3 L-2.3 270.3 L-1.5 268.3 L-0.6 266.3 L0.1 264.2 L0.8 262.1 L1.4 260.0 L1.9 257.8 L2.4 255.6 L2.8 253.3 L3.2 250.9 L3.5 248.5 L3.7 245.9 L3.9 243.4 L4.1 240.7 L4.2 237.9 L4.0 235.0 L4.0 235.0 L1.9 237.0 L0.1 239.2 L-1.5 241.4 L-3.0 243.7 L-4.3 246.0 L-5.5 248.3 L-6.5 250.6 L-7.4 252.9 L-8.1 255.3 L-8.7 257.6 L-9.1 260.0 L-9.3 262.4 L-9.4 264.7 L-9.4 267.1 L-9.1 269.4 L-8.7 271.7 Z"/>
  </g>
</g>
</svg>

<!-- add page -->
<div class="abs" style="left:301px;top:463px;width:659px;height:24px;background:#dde0e7;border-radius:2px"></div>
<div class="t" style="left:615.4px;top:471.7px;font-size:8.5px;font-weight:bold;color:#0e1318">+ Add page</div>

<!-- bottom bar -->
<div class="abs" style="left:266px;top:518px;width:694px;height:22px;background:#fff;box-shadow:0 -1px 1px rgba(40,50,70,0.05)"></div>
<svg style="left:0;top:0" width="960" height="540">
  <path d="M617 518.5 Q622 518.3 624.5 514.5 Q627 511 632 511 L665 511 Q670 511 672.5 514.5 Q675 518.3 680 518.5 Z" fill="#fff"/>
  <path d="M646.3 517.8 L648.5 515.6 L650.7 517.8" fill="none" stroke="#0e1318" stroke-width="1.1"/>
  <path d="M272.6 510 L270.4 512.2 L272.6 514.4" fill="none" stroke="#3a3e43" stroke-width="1.1"/>
  <!-- notes icon -->
  <path d="M276.2 526.6 L283.8 526.6 M276.2 529.4 L281 529.4 M276.2 532 L278.6 532 M276.2 534.4 L277.3 534.4" fill="none" stroke="#1a1e22" stroke-width="0.95"/>
  <path d="M279.7 535.2 L280.3 532.4 L285.6 527.1 L287 528.5 L281.7 533.8 Z" fill="#6a6d70" stroke="#0e1318" stroke-width="0.9" stroke-linejoin="round"/>
  <!-- slider -->
  <line x1="806" y1="530.4" x2="832" y2="530.4" stroke="#7d8186" stroke-width="1"/>
  <line x1="832" y1="530.4" x2="929" y2="530.4" stroke="#dadce0" stroke-width="1"/>
  <circle cx="832.3" cy="530.4" r="3.7" fill="#0e1318"/>
  <!-- pages icon -->
  <path d="M947.2 523.4 L955.5 523.4 Q957.6 523.4 957.6 525.5 L957.6 534" fill="none" stroke="#0e1318" stroke-width="0.9"/>
  <rect x="944.7" y="525.6" width="11" height="11" rx="1" fill="#fff" stroke="#0e1318" stroke-width="1"/>
</svg>
<div class="t" style="left:948.6px;top:527.9px;font-size:6.4px;font-weight:bold;color:#0e1318">6</div>
<div class="t" style="left:293.5px;top:526.7px;font-size:9px;font-weight:bold;color:#0e1318">Notes</div>
<div class="t" style="left:768px;top:527.2px;font-size:8.5px;font-weight:bold;color:#0e1318">114%</div>

</body></html>
